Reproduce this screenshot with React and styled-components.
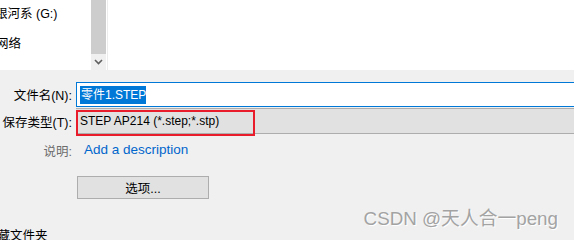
import styled, { createGlobalStyle } from "styled-components";

const GlobalStyle = createGlobalStyle`
  html, body {
    margin: 0;
    padding: 0;
    background: #f0f0f0;
  }
`;

const Page = styled.div`
  position: relative;
  width: 574px;
  height: 240px;
  overflow: hidden;
  background: #f0f0f0;
  font-family: "Liberation Sans", "Noto Sans CJK SC", sans-serif;
  font-size: 12px;
  color: #000;
`;

const TopPane = styled.div`
  display: flex;
  height: 70px;
  background: #fff;
`;

const NavList = styled.div`
  width: 91px;
  overflow: hidden;
  display: flex;
  flex-direction: column;
  gap: 10px;
  padding-top: 4px;
`;

const NavItem = styled.div`
  height: 20px;
  line-height: 20px;
  font-size: 12.5px;
  white-space: nowrap;
  margin-left: ${(p) => p.$shift}px;
`;

const ScrollBar = styled.div`
  width: 15px;
  background: #f0f0f0;
  display: flex;
  flex-direction: column;
`;

const Thumb = styled.div`
  height: 54px;
  background: #cdcdcd;
`;

const ArrowBox = styled.div`
  height: 16px;
  display: flex;
  align-items: center;
  justify-content: center;
`;

const RightPane = styled.div`
  flex: 1;
  margin-left: 1px;
  border-left: 1px solid #ececec;
  background: #fff;
`;

const Form = styled.div`
  display: grid;
  grid-template-columns: 72px 1fr;
  column-gap: 4px;
  row-gap: 1px;
  margin-top: 12px;
`;

const Label = styled.div`
  display: flex;
  align-items: center;
  justify-content: flex-end;
  white-space: nowrap;
  font-size: 12.5px;
  color: ${(p) => (p.$muted ? "#6d6d6d" : "#000")};
`;

const Input = styled.div`
  height: 25px;
  box-sizing: border-box;
  border: 1px solid #0078d7;
  border-right: none;
  background: #fff;
  display: flex;
  align-items: center;
  padding-left: 3px;
`;

const Selected = styled.span`
  background: #0078d7;
  color: #fff;
  font-size: 12px;
  line-height: 18px;
  padding: 0 0 0 1px;
`;

const Combo = styled.div`
  position: relative;
  height: 26px;
  box-sizing: border-box;
  border-top: 1px solid #adadad;
  border-bottom: 1px solid #adadad;
  background: #e1e1e1;
  display: flex;
  align-items: center;
  padding-left: 4px;
`;

const Highlight = styled.div`
  position: absolute;
  left: 0;
  top: 1px;
  width: 179px;
  height: 26px;
  box-sizing: border-box;
  border: 2px solid #e81c2b;
`;

const Link = styled.a`
  color: #0066cc;
  text-decoration: none;
  padding-left: 8px;
  font-size: 13.5px;
  line-height: 30px;
`;

const ButtonRow = styled.div`
  padding: 11px 0 0 77px;
`;

const Button = styled.button`
  width: 132px;
  height: 23px;
  box-sizing: border-box;
  border: 1px solid #adadad;
  background: #e1e1e1;
  font: inherit;
  font-size: 12.5px;
  color: #000;
  padding: 0;
`;

const Footer = styled.div`
  margin-top: 26px;
  margin-left: -15px;
  font-size: 12.5px;
  white-space: nowrap;
`;

const Watermark = styled.div`
  position: absolute;
  right: 16px;
  bottom: 10px;
  font-family: "Liberation Sans", "Noto Sans CJK SC", sans-serif;
  font-size: 18.8px;
  color: #a3a3a3;
  text-shadow: 1px 1px 0 #fff;
  white-space: nowrap;
`;

const ChevronDown = () => (
  <svg width="9" height="6" viewBox="0 0 9 6">
    <path d="M1 1 L4.5 4.5 L8 1" fill="none" stroke="#606060" strokeWidth="1.6" />
  </svg>
);

export default function App() {
  return (
    <>
      <GlobalStyle />
      <Page>
        <TopPane>
          <NavList>
            <NavItem $shift={-5}>银河系 (G:)</NavItem>
            <NavItem $shift={-4}>网络</NavItem>
          </NavList>
          <ScrollBar>
            <Thumb />
            <ArrowBox>
              <ChevronDown />
            </ArrowBox>
          </ScrollBar>
          <RightPane />
        </TopPane>

        <Form>
          <Label>文件名(N):</Label>
          <Input>
            <Selected>零件1.STEP</Selected>
          </Input>

          <Label>保存类型(T):</Label>
          <Combo>
            STEP AP214 (*.step;*.stp)
            <Highlight />
          </Combo>

          <Label $muted>说明:</Label>
          <div>
            <Link href="#">Add a description</Link>
          </div>
        </Form>

        <ButtonRow>
          <Button>选项...</Button>
        </ButtonRow>

        <Footer>隐藏文件夹</Footer>

        <Watermark>CSDN @天人合一peng</Watermark>
      </Page>
    </>
  );
}
